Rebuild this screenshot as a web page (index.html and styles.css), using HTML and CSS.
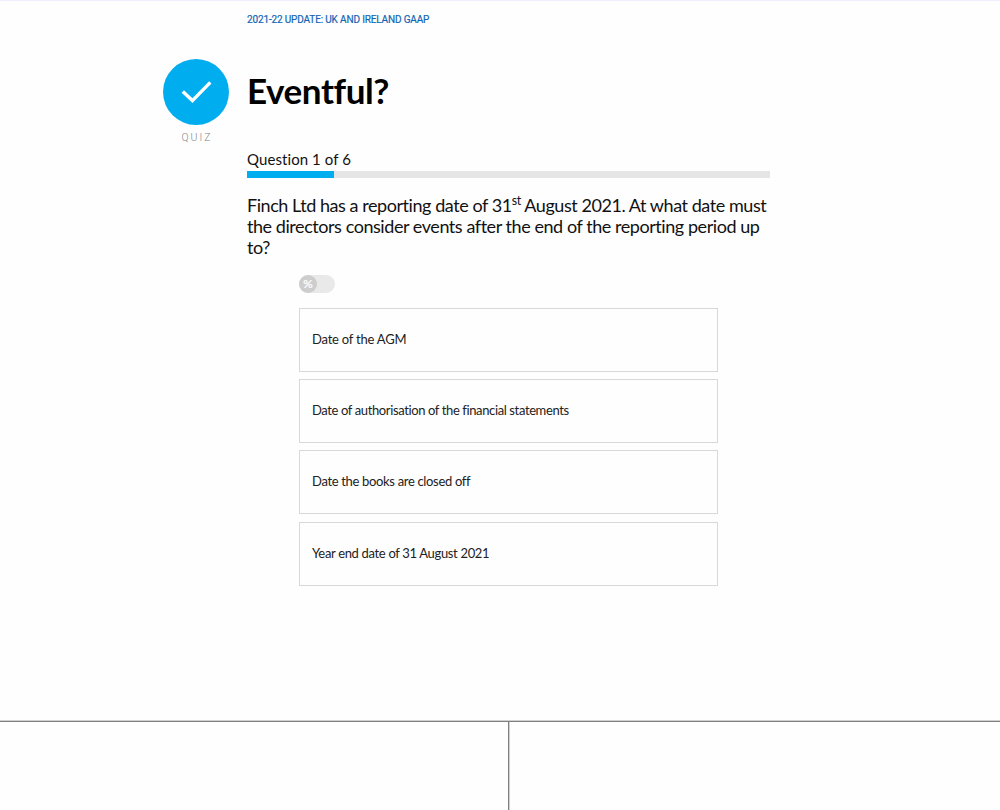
FILE: index.html
```
<!DOCTYPE html>
<html lang="en">
<head>
    <meta charset="UTF-8">
    <meta name="viewport" content="width=device-width, initial-scale=1.0">
    <title>Eventful?</title>
    <link rel="stylesheet" href="styles.css">
</head>
<body>
    <main class="module">
        <div class="badge">
            <div class="badge-circle">
                <svg width="66" height="66" viewBox="0 0 66 66">
                    <path d="M19.8 32.5 L29.4 41.6 L47.3 23.4" fill="none" stroke="#fff" stroke-width="3.4"/>
                </svg>
            </div>
            <span class="badge-label">QUIZ</span>
        </div>

        <div class="content">
            <div class="course">2021-22 UPDATE: UK AND IRELAND GAAP</div>
            <h1>Eventful?</h1>

            <div class="counter">Question 1 of 6</div>
            <div class="progress"><div class="progress-bar"></div></div>

            <p class="question">
                Finch Ltd has a reporting date of 31<sup>st</sup> August 2021. At what date must<br>
                the directors consider events after the end of the reporting period up<br>
                to?
            </p>

            <div class="answers">
                <div class="toggle"><span class="toggle-knob">%</span></div>
                <div class="option option-short">Date of the AGM</div>
                <div class="option option-long">Date of authorisation of the financial statements</div>
                <div class="option">Date the books are closed off</div>
                <div class="option">Year end date of 31 August 2021</div>
            </div>
        </div>
    </main>

    <footer class="footer">
        <div class="footer-prev"></div>
        <div class="footer-next"></div>
    </footer>
</body>
</html>
```

FILE: styles.css
```
* {
    box-sizing: border-box;
}
body {
    margin: 0;
    height: 810px;
    display: flex;
    flex-direction: column;
    overflow: hidden;
    border-top: 1px solid #f0effd;
    background-color: #fefefe;
    color: #111;
    font-family: Lato, "Liberation Sans", sans-serif;
    font-variant-ligatures: none;
}
.module {
    flex: 1;
    display: flex;
    padding-left: 163px;
}
.badge {
    width: 84px;
    padding-top: 58.4px;
}
.badge-circle {
    width: 66px;
    height: 66px;
    border-radius: 50%;
    background-color: #00adef;
}
.badge-circle svg {
    display: block;
}
.badge-label {
    display: block;
    padding: 6px 0 0 18.5px;
    font-family: Roboto, sans-serif;
    font-size: 10.5px;
    font-weight: 300;
    line-height: 14px;
    letter-spacing: 2px;
    color: #888;
}
.content {
    width: 523px;
    white-space: nowrap;
}
.course {
    margin-top: 11px;
    font-family: Roboto, sans-serif;
    font-size: 10px;
    line-height: 16px;
    letter-spacing: -0.15px;
    color: #1265b5;
    -webkit-text-stroke: 0.2px #1265b5;
}
h1 {
    margin: 41px 0 0;
    font-size: 35px;
    line-height: 42px;
    letter-spacing: -0.42px;
    color: #000;
}
.counter {
    margin-top: 38px;
    font-size: 15px;
    line-height: 20px;
    letter-spacing: 0.08px;
}
.progress {
    height: 7px;
    margin-top: 2px;
    background-color: #e5e5e5;
}
.progress-bar {
    width: 87px;
    height: 7px;
    background-color: #00adef;
}
.question {
    margin: 17.4px 0 0;
    font-size: 18px;
    line-height: 20.8px;
    letter-spacing: -0.44px;
}
.question sup {
    font-size: 12.5px;
    line-height: 0;
}
.answers {
    width: 419px;
    margin: 17.6px 0 0 52px;
}
.toggle {
    width: 36px;
    height: 18px;
    margin-bottom: 14.2px;
    border-radius: 9px;
    background-color: #e9e9e9;
}
.toggle-knob {
    display: block;
    width: 18px;
    height: 18px;
    border-radius: 50%;
    background-color: #cdcdcd;
    color: #fff;
    font-size: 12px;
    font-weight: bold;
    line-height: 18px;
    text-align: center;
}
.option {
    display: flex;
    align-items: center;
    height: 64px;
    margin-bottom: 7.4px;
    padding: 0 0 2px 12px;
    border: 1px solid #d8d8d8;
    font-size: 13px;
    letter-spacing: -0.33px;
    color: #222;
}
.option-short {
    letter-spacing: -0.22px;
}
.option-long {
    letter-spacing: -0.38px;
}
.footer {
    display: flex;
    height: 89px;
    border-top: 1px solid #808080;
    box-shadow: 0 -1px #d0d0d0;
}
.footer-prev {
    width: 509px;
    border-right: 1px solid #808080;
    box-shadow: 1px 0 #d0d0d0;
}
```
